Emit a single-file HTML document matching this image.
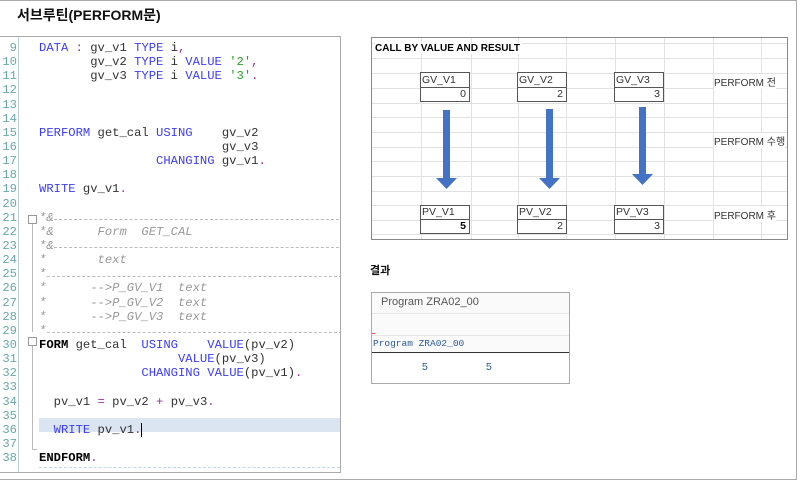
<!DOCTYPE html>
<html><head><meta charset="utf-8"><style>
body{margin:0;width:800px;height:480px;background:#fff;position:relative;overflow:hidden;font-family:"Liberation Sans","Noto Sans CJK KR",sans-serif}
.abs{position:absolute}
.code{position:absolute;left:0;top:36px;width:340px;height:435px;border:1px solid #aaa;border-left:none;background:#fff;overflow:hidden}
.ln{position:absolute;left:0;width:17px;text-align:right;font:12.2px "Liberation Mono",monospace;color:#6aa8a8}
.cl{position:absolute;left:39px;font:12.2px "Liberation Mono",monospace;color:#333;white-space:pre}
.k{color:#3b3bff}.s{color:#2aa02a}.p{color:#a0309a}.c{color:#999;font-style:italic}.b{font-weight:bold;color:#000}
.cell{position:absolute;font-size:10.5px;color:#333;border:1px solid #555;background:#fff;box-sizing:border-box}
.lab{position:absolute;font-size:10px;color:#333;background:#fff;white-space:nowrap}
</style></head><body>
<div class="abs" style="left:0;top:0;width:796px;height:478px;border:1px solid #aaa;border-left:none"></div>
<div class="abs" style="left:17px;top:5px;font-size:14px;font-weight:bold;color:#111">서브루틴(PERFORM문)</div>

<div class="code">
<div class="abs" style="left:18px;top:0;width:1px;height:435px;background:#bcd"></div>
<div class="abs" style="left:39px;top:381px;width:301px;height:14px;background:#dbe5f1"></div>
<div class="abs" style="left:54px;top:182px;width:290px;border-top:1px dashed #bbb"></div>
<div class="abs" style="left:54px;top:210px;width:290px;border-top:1px dashed #bbb"></div>
<div class="abs" style="left:47px;top:239px;width:300px;border-top:1px dashed #bbb"></div>
<div class="abs" style="left:47px;top:295px;width:300px;border-top:1px dashed #bbb"></div>
<div class="abs" style="left:32px;top:187px;width:1px;height:108px;background:#bbb"></div>
<div class="abs" style="left:32px;top:300px;width:1px;height:113px;background:#bbb"></div>
<div class="abs" style="left:32px;top:412px;width:5px;height:1px;background:#bbb"></div>
<div class="abs" style="left:28px;top:178px;width:7px;height:7px;border:1px solid #999;background:#fff"></div>
<div class="abs" style="left:28px;top:300px;width:7px;height:7px;border:1px solid #999;background:#fff"></div>
<div class="abs" style="left:39px;top:430px;width:301px;border-top:1px dashed #bdd"></div>
</div>
<div id="lines"></div>
<script>
var L=[
'<span class="k">DATA</span> <span class="p">:</span> gv_v1 <span class="k">TYPE</span> i<span class="p">,</span>',
'       gv_v2 <span class="k">TYPE</span> i <span class="k">VALUE</span> <span class="s">\'2\'</span><span class="p">,</span>',
'       gv_v3 <span class="k">TYPE</span> i <span class="k">VALUE</span> <span class="s">\'3\'</span><span class="p">.</span>',
'','','',
'<span class="k">PERFORM</span> get_cal <span class="k">USING</span>    gv_v2',
'                         gv_v3',
'                <span class="k">CHANGING</span> gv_v1<span class="p">.</span>',
'',
'<span class="k">WRITE</span> gv_v1<span class="p">.</span>',
'',
'<span class="c">*&amp;</span>',
'<span class="c">*&amp;      Form  GET_CAL</span>',
'<span class="c">*&amp;</span>',
'<span class="c">*       text</span>',
'<span class="c">*</span>',
'<span class="c">*      --&gt;P_GV_V1  text</span>',
'<span class="c">*      --&gt;P_GV_V2  text</span>',
'<span class="c">*      --&gt;P_GV_V3  text</span>',
'<span class="c">*</span>',
'<span class="b">FORM</span> get_cal  <span class="k">USING</span>    <span class="k">VALUE</span>(pv_v2)',
'                   <span class="k">VALUE</span>(pv_v3)',
'              <span class="k">CHANGING</span> <span class="k">VALUE</span>(pv_v1)<span class="p">.</span>',
'',
'  pv_v1 <span class="p">=</span> pv_v2 <span class="p">+</span> pv_v3<span class="p">.</span>',
'',
'  <span class="k">WRITE</span> pv_v1<span class="p">.</span><span style="border-left:1px solid #000"></span>',
'',
'<span class="b">ENDFORM</span><span class="p">.</span>'];
var h='';
for(var i=0;i<30;i++){var t=41+i*14.14;
h+='<div class="ln" style="top:'+t+'px">'+(9+i)+'</div><div class="cl" style="top:'+t+'px">'+L[i]+'</div>';}
document.getElementById('lines').innerHTML=h;
</script>

<!-- Excel -->
<div class="abs" style="left:371px;top:37px;width:417px;height:203px;border:1px solid #888;box-sizing:border-box;overflow:hidden">
<svg width="417" height="203" style="position:absolute;left:0;top:0">
<g stroke="#e2e2e2" stroke-width="1">
<line x1="49.5" y1="0" x2="49.5" y2="203"/><line x1="99.5" y1="0" x2="99.5" y2="203"/><line x1="146.5" y1="0" x2="146.5" y2="203"/><line x1="194.5" y1="0" x2="194.5" y2="203"/><line x1="243.5" y1="0" x2="243.5" y2="203"/><line x1="292.5" y1="0" x2="292.5" y2="203"/><line x1="341.5" y1="0" x2="341.5" y2="203"/><line x1="389.5" y1="0" x2="389.5" y2="203"/>
<line x1="0" y1="5.5" x2="417" y2="5.5"/><line x1="0" y1="20.5" x2="417" y2="20.5"/><line x1="0" y1="35.5" x2="417" y2="35.5"/><line x1="0" y1="50.5" x2="417" y2="50.5"/><line x1="0" y1="65.5" x2="417" y2="65.5"/><line x1="0" y1="79.5" x2="417" y2="79.5"/><line x1="0" y1="94.5" x2="417" y2="94.5"/><line x1="0" y1="109.5" x2="417" y2="109.5"/><line x1="0" y1="123.5" x2="417" y2="123.5"/><line x1="0" y1="138.5" x2="417" y2="138.5"/><line x1="0" y1="153.5" x2="417" y2="153.5"/><line x1="0" y1="167.5" x2="417" y2="167.5"/><line x1="0" y1="182.5" x2="417" y2="182.5"/><line x1="0" y1="196.5" x2="417" y2="196.5"/>
</g>
<g fill="#4472c4">
<rect x="71" y="72" width="7" height="68"/><polygon points="64,140 85,140 74.5,151"/>
<rect x="174" y="71" width="7" height="69"/><polygon points="167,140 188,140 177.5,151"/>
<rect x="267" y="69" width="7" height="67"/><polygon points="260,136 281,136 270.5,147"/>
</g>
</svg>
<div class="abs" style="left:3px;top:5px;font-size:10px;font-weight:bold;color:#000;background:#fff;padding-right:2px">CALL BY VALUE AND RESULT</div>
<div class="lab" style="left:342px;top:36px">PERFORM 전</div>
<div class="lab" style="left:342px;top:95px">PERFORM 수행</div>
<div class="lab" style="left:342px;top:169px">PERFORM 후</div>
</div>
<div id="boxes"></div>
<script>
var xs=[420,517,614],n1=['GV_V1','GV_V2','GV_V3'],n2=['PV_V1','PV_V2','PV_V3'],v1=['0','2','3'],v2=['5','2','3'],b='';
for(var i=0;i<3;i++){
b+='<div class="cell" style="left:'+xs[i]+'px;top:72px;width:50px;height:16px;padding-left:1px;line-height:14px">'+n1[i]+'</div>';
b+='<div class="cell" style="left:'+xs[i]+'px;top:87px;width:50px;height:15px;text-align:right;padding-right:3px;line-height:13px">'+v1[i]+'</div>';
b+='<div class="cell" style="left:'+xs[i]+'px;top:205px;width:50px;height:15px;padding-left:1px;line-height:13px">'+n2[i]+'</div>';
b+='<div class="cell" style="left:'+xs[i]+'px;top:219px;width:50px;height:15px;text-align:right;padding-right:3px;line-height:13px;'+(i==0?'font-weight:bold;color:#000':'')+'">'+v2[i]+'</div>';}
document.getElementById('boxes').innerHTML=b;
</script>

<div class="abs" style="left:370px;top:262px;font-size:11px;font-weight:bold;color:#111">결과</div>
<div class="abs" style="left:371px;top:292px;width:199px;height:92px;border:1px solid #aaa;box-sizing:border-box;background:#fafafa;overflow:hidden">
<div class="abs" style="left:9px;top:3px;font-size:11px;color:#555">Program ZRA02_00</div>
<div class="abs" style="left:0;top:20px;width:197px;border-top:1px solid #e6e6e6"></div>
<div class="abs" style="left:0;top:42px;width:197px;border-top:1px solid #e6e6e6"></div>
<div class="abs" style="left:0;top:40px;width:3px;height:1px;background:#e55"></div>
<div class="abs" style="left:1px;top:45px;font:9.5px 'Liberation Mono',monospace;color:#2a5a9a">Program ZRA02_00</div>
<div class="abs" style="left:0;top:59px;width:197px;height:30px;border-top:1px solid #333;background:#fff"></div>
<div class="abs" style="left:50px;top:68px;font-size:10.5px;color:#2a5a9a">5</div>
<div class="abs" style="left:114px;top:68px;font-size:10.5px;color:#2a5a9a">5</div>
</div>
</body></html>
